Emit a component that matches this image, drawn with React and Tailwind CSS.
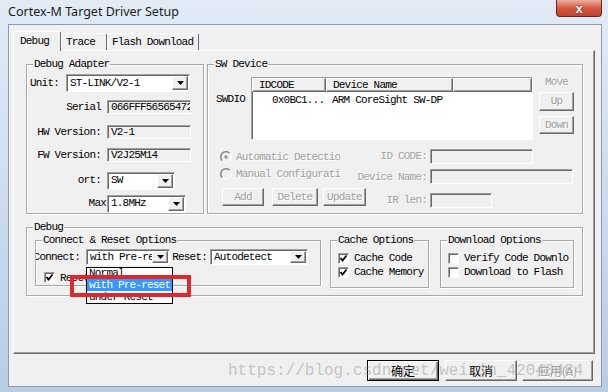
import React from 'react'

const raised =
  'border border-t-white border-l-white border-r-[#696969] border-b-[#696969] shadow-[inset_-1px_-1px_0_#a0a0a0]'
const sunken =
  'border border-t-[#a0a0a0] border-l-[#a0a0a0] border-r-white border-b-white shadow-[inset_1px_1px_0_#696969]'
const dim = 'text-[#a0a0a0] [text-shadow:1px_1px_0_#fff]'

function Arrow() {
  return (
    <svg width="7" height="4" viewBox="0 0 7 4">
      <polygon points="0,0 7,0 3.5,4" fill="#000" />
    </svg>
  )
}

function Combo({ value, className }) {
  return (
    <div className={`flex bg-white ${sunken} ${className}`}>
      <div className="flex-1 overflow-hidden whitespace-nowrap pl-[3px] flex items-center">{value}</div>
      <div className={`w-[16px] my-[1px] mr-[1px] bg-[#f0f0f0] flex items-center justify-center ${raised}`}>
        <Arrow />
      </div>
    </div>
  )
}

function Field({ value, className }) {
  return (
    <div className={`bg-[#f0f0f0] ${sunken} overflow-hidden whitespace-nowrap pl-[3px] flex items-center ${className}`}>
      {value}
    </div>
  )
}

function Check({ on }) {
  return (
    <span className={`w-[11px] h-[11px] shrink-0 bg-white flex items-center justify-center ${sunken}`}>
      {on && (
        <svg width="9" height="9" viewBox="0 0 9 9">
          <polyline points="1.5,4 3.5,6.5 7.5,1.5" fill="none" stroke="#000" strokeWidth="1.8" />
        </svg>
      )}
    </span>
  )
}

function Radio({ on }) {
  return (
    <svg width="12" height="12" viewBox="0 0 12 12" className="shrink-0">
      <circle cx="6" cy="6" r="5.3" fill="#f0f0f0" />
      <path d="M2.3 9.7 A5.2 5.2 0 0 1 9.7 2.3" fill="none" stroke="#8a8a8a" strokeWidth="1.6" />
      <path d="M9.7 2.3 A5.2 5.2 0 0 1 2.3 9.7" fill="none" stroke="#ffffff" strokeWidth="1.2" />
      {on && <circle cx="6" cy="6" r="1.8" fill="#9a9a9a" />}
    </svg>
  )
}

function Group({ title, className, children }) {
  return (
    <div className={`border border-[#a9a9a9] shadow-[inset_1px_1px_0_#fff,1px_1px_0_#fff] ${className}`}>
      <div className="-mt-[7px] ml-[6px] w-fit bg-[#f0f0f0] px-[1px] leading-[12px] whitespace-nowrap">{title}</div>
      {children}
    </div>
  )
}

function Btn({ children, className, off }) {
  return (
    <div className={`bg-[#f0f0f0] flex items-center justify-center ${raised} ${off ? dim : ''} ${className}`}>
      {children}
    </div>
  )
}

export default function App() {
  return (
    <div className="relative w-[608px] h-[392px] overflow-hidden flex flex-col bg-gradient-to-b from-[#e2ebf6] via-[#cddcee] to-[#b8cce4] font-['Liberation_Mono',monospace] text-[11px] tracking-[-0.8px] text-black">
      {/* title bar */}
      <div className="h-[24px] shrink-0 flex items-start">
        <div className="pl-[8px] pt-[3px] font-['Noto_Sans',sans-serif] text-[12.5px] tracking-normal leading-[17px] text-[#1b1b1b]">
          Cortex-M Target Driver Setup
        </div>
        <div className="ml-auto mr-[6px] w-[46px] h-[17px] rounded-b-[4px] border border-t-0 border-[#6e2419] bg-gradient-to-b from-[#eab0a3] via-[#d4583f] to-[#c0452e] flex items-center justify-center font-['Liberation_Sans',sans-serif] text-[13px] font-bold tracking-normal leading-none text-white [text-shadow:0_0_2px_#5a1a10]">
          x
        </div>
      </div>

      {/* client area */}
      <div className="flex-1 ml-[8px] mr-[6px] mb-[5px] bg-[#f0f0f0] border border-[#8b9bb1] pl-[4px] pr-[6px] pt-[6px] flex flex-col">
        {/* tabs */}
        <div className="h-[19px] flex items-end">
          <div className="relative z-10 -mb-[1px] w-[48px] h-[20px] bg-[#f0f0f0] border border-b-0 border-t-white border-l-white border-r-[#696969] rounded-t-[2px] pl-[6px] leading-[18px]">
            Debug
          </div>
          <div className="w-[46px] h-[17px] border border-b-0 border-t-white border-l-white border-r-[#696969] rounded-t-[2px] pl-[4px] leading-[16px]">
            Trace
          </div>
          <div className="w-[92px] h-[17px] border border-b-0 border-t-white border-l-white border-r-[#696969] rounded-t-[2px] pl-[4px] leading-[16px] whitespace-nowrap">
            Flash Download
          </div>
        </div>

        {/* tab panel */}
        <div className={`h-[304px] bg-[#f0f0f0] pl-[12px] pt-[13px] ${raised}`}>
          <div className="flex gap-[3px]">
            {/* Debug Adapter */}
            <Group title="Debug Adapter" className="w-[178px] h-[150px]">
              <div className="mt-[4px] flex items-center pl-[3px]">
                <div className="w-[36px]">Unit:</div>
                <Combo value="ST-LINK/V2-1" className="w-[124px] h-[18px]" />
              </div>
              <div className="mt-[7px] flex items-center">
                <div className="w-[80px] text-right pr-[6px]">Serial</div>
                <Field value="066FFF56565472" className="w-[84px] h-[14px]" />
              </div>
              <div className="mt-[8px] flex items-center">
                <div className="w-[80px] text-right pr-[6px] whitespace-nowrap">HW Version:</div>
                <Field value="V2-1" className="w-[84px] h-[14px]" />
              </div>
              <div className="mt-[7px] flex items-center">
                <div className="w-[80px] text-right pr-[6px] whitespace-nowrap">FW Version:</div>
                <Field value="V2J25M14" className="w-[84px] h-[14px]" />
              </div>
              <div className="mt-[8px] flex items-center">
                <div className="w-[80px] text-right pr-[6px]">ort:</div>
                <Combo value="SW" className="w-[68px] h-[18px]" />
              </div>
              <div className="mt-[5px] flex items-center">
                <div className="w-[80px] text-right pr-[1px]">Max</div>
                <Combo value="1.8MHz" className="w-[79px] h-[18px]" />
              </div>
            </Group>

            {/* SW Device */}
            <Group title="SW Device" className="w-[376px] h-[150px]">
              <div className="mt-[7px] flex pl-[8px]">
                <div className="w-[35px] pt-[16px] leading-[12px]">SWDIO</div>
                <div className={`w-[282px] h-[63px] bg-white ${sunken} flex flex-col`}>
                  <div className="flex h-[14px] shrink-0 leading-[12px]">
                    <div className={`w-[74px] bg-[#f0f0f0] pl-[6px] ${raised}`}>IDCODE</div>
                    <div className={`w-[127px] bg-[#f0f0f0] pl-[6px] ${raised}`}>Device Name</div>
                    <div className={`flex-1 bg-[#f0f0f0] ${raised}`} />
                  </div>
                  <div className="flex mt-[2px] leading-[12px] whitespace-nowrap">
                    <div className="w-[74px] pl-[20px]">0x0BC1...</div>
                    <div className="pl-[6px]">ARM CoreSight SW-DP</div>
                  </div>
                </div>
                <div className="ml-[6px] w-[35px] flex flex-col">
                  <div className={`text-center leading-[10px] ${dim}`}>Move</div>
                  <Btn off className="mt-[5px] h-[19px]">Up</Btn>
                  <Btn off className="mt-[5px] h-[18px]">Down</Btn>
                </div>
              </div>

              <div className="flex">
                <div className="w-[158px] pl-[12px]">
                  <div className="mt-[11px] h-[12px] flex items-center">
                    <Radio on />
                    <div className={`ml-[4px] w-[104px] overflow-hidden whitespace-nowrap ${dim}`}>Automatic Detection</div>
                  </div>
                  <div className="mt-[5px] h-[12px] flex items-center">
                    <Radio />
                    <div className={`ml-[4px] w-[104px] overflow-hidden whitespace-nowrap ${dim}`}>Manual Configuration</div>
                  </div>
                  <div className="mt-[8px] flex">
                    <Btn off className="ml-[2px] w-[42px] h-[18px]">Add</Btn>
                    <Btn off className="ml-[8px] w-[46px] h-[18px]">Delete</Btn>
                    <Btn off className="ml-[5px] w-[43px] h-[18px]">Update</Btn>
                  </div>
                </div>
                <div>
                  <div className="mt-[8px] flex items-center">
                    <div className={`w-[64px] pr-[3px] flex justify-end whitespace-nowrap ${dim}`}>ID CODE:</div>
                    <Field className="w-[103px] h-[15px]" />
                  </div>
                  <div className="mt-[4px] flex items-center">
                    <div className={`w-[64px] pr-[3px] flex justify-end whitespace-nowrap ${dim}`}>Device Name:</div>
                    <Field className="w-[143px] h-[15px]" />
                  </div>
                  <div className="mt-[7px] flex items-center">
                    <div className={`w-[64px] pr-[3px] flex justify-end whitespace-nowrap ${dim}`}>IR len:</div>
                    <Field className="w-[62px] h-[15px]" />
                  </div>
                </div>
              </div>
            </Group>
          </div>

          {/* Debug */}
          <Group title="Debug" className="mt-[13px] w-[557px] h-[69px]">
            <div className="mt-[7px] pl-[8px] flex items-start">
              <Group title="Connect & Reset Options" className="w-[286px] h-[46px]">
                <div className="mt-[3px] flex items-center">
                  <div className="w-[46px] pr-[2px] flex justify-end overflow-hidden whitespace-nowrap">Connect:</div>
                  <Combo value="with Pre-reset" className="ml-[4px] w-[84px] h-[16px]" />
                  <div className="w-[37px] flex justify-end overflow-hidden whitespace-nowrap">Reset:</div>
                  <Combo value="Autodetect" className="ml-[3px] w-[98px] h-[16px]" />
                </div>
                <div className="mt-[4px] pl-[8px] flex items-center">
                  <Check on />
                  <div className="ml-[5px] whitespace-nowrap">Reset after Connect</div>
                </div>
              </Group>
              <Group title="Cache Options" className="ml-[9px] w-[99px] h-[48px]">
                <div className="mt-[5px] pl-[7px] h-[14px] flex items-center">
                  <Check on />
                  <div className="ml-[5px] whitespace-nowrap">Cache Code</div>
                </div>
                <div className="pl-[7px] h-[14px] flex items-center">
                  <Check on />
                  <div className="ml-[5px] whitespace-nowrap">Cache Memory</div>
                </div>
              </Group>
              <Group title="Download Options" className="ml-[11px] w-[134px] h-[48px]">
                <div className="mt-[5px] pl-[7px] h-[14px] flex items-center">
                  <Check />
                  <div className="ml-[5px] w-[105px] overflow-hidden whitespace-nowrap">Verify Code Download</div>
                </div>
                <div className="pl-[7px] h-[14px] flex items-center">
                  <Check />
                  <div className="ml-[5px] whitespace-nowrap">Download to Flash</div>
                </div>
              </Group>
            </div>
          </Group>
        </div>

        {/* dialog buttons */}
        <div className="mt-[6px] pr-[2px] flex justify-end font-['Noto_Sans_CJK_SC',sans-serif] text-[12px] tracking-normal">
          <div className="w-[72px] h-[21px] bg-[#f0f0f0] border border-black shadow-[inset_1px_1px_0_#fff,inset_-1px_-1px_0_#696969,inset_-2px_-2px_0_#a0a0a0] flex items-center justify-center leading-none">
            确定
          </div>
          <Btn className="ml-[6px] w-[72px] h-[21px] leading-none">取消</Btn>
          <Btn off className="ml-[5px] w-[71px] h-[21px] leading-none">应用(A)</Btn>
        </div>
      </div>

      {/* open drop-down list */}
      <div className="absolute left-[86px] top-[267px] w-[87px] h-[37px] bg-white border border-black leading-[11px] whitespace-nowrap">
        <div className="h-[11px] pl-[2px]">Normal</div>
        <div className="h-[12px] pl-[2px] bg-[#3399ff] text-white leading-[12px]">with Pre-reset</div>
        <div className="h-[12px] pl-[2px] leading-[12px]">under Reset</div>
      </div>

      {/* red highlight */}
      <div className="absolute left-[70px] top-[275px] w-[121px] h-[22px] border-[4px] border-[#e2262c]" />

      {/* watermark */}
      <div className="absolute left-[228px] top-[361px] text-[16px] tracking-normal leading-[20px] text-[rgba(150,150,150,0.5)] whitespace-nowrap pointer-events-none">
        https://blog.csdn.net/weixin_42040484
      </div>
    </div>
  )
}
